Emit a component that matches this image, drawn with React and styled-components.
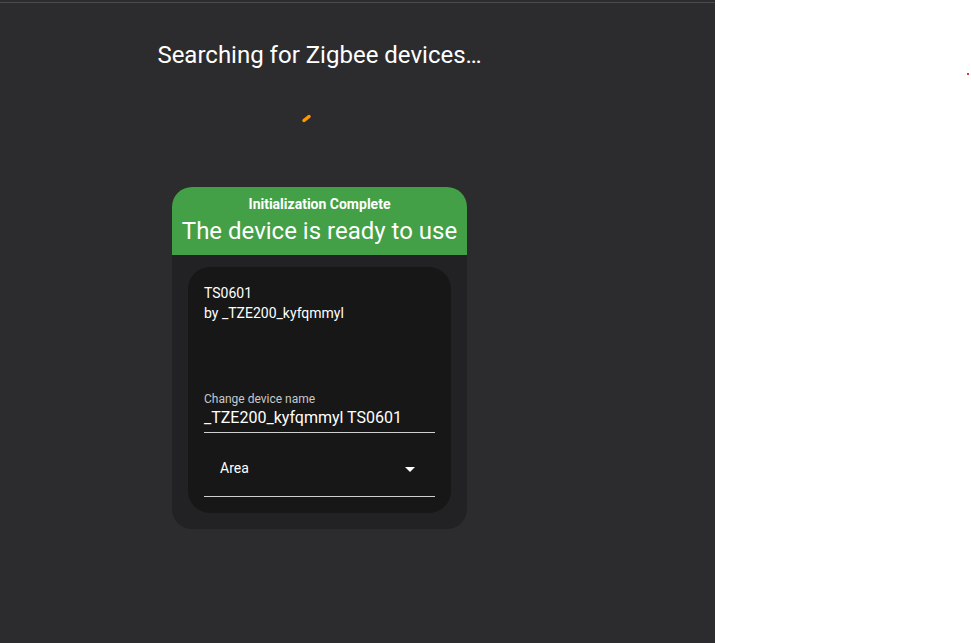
import React from 'react';
import styled, { createGlobalStyle } from 'styled-components';

const Global = createGlobalStyle`
  html, body {
    margin: 0;
    padding: 0;
    background: #ffffff;
    font-family: Roboto, "Noto Sans", sans-serif;
  }
`;

const Page = styled.div`
  display: flex;
  height: 643px;
`;

const Panel = styled.div`
  width: 715px;
  height: 100%;
  background: #2c2c2e;
  border-top: 1px solid #4b4b4d;
  margin-top: 2px;
  box-shadow: 0 -2px 0 #2c2c2e;
  box-sizing: border-box;
  display: flex;
  flex-direction: column;
  align-items: center;
  padding-right: 76px;
`;

const Title = styled.h1`
  margin: 36px 0 0;
  font-size: 24px;
  font-weight: 400;
  line-height: 32px;
  color: #ffffff;
`;

const Spinner = styled.svg`
  display: block;
  margin: 42px 0 0 -25px;
`;

const Card = styled.div`
  margin-top: 64px;
  width: 295px;
  background: #222224;
  border-radius: 20px;
  overflow: hidden;
  padding-bottom: 16px;
`;

const Banner = styled.div`
  background: #43a047;
  color: #ffffff;
  text-align: center;
  padding: 8px 0 7px;
`;

const BannerTitle = styled.div`
  font-size: 14px;
  font-weight: 700;
  line-height: 18px;
`;

const BannerText = styled.div`
  font-size: 24px;
  line-height: 34px;
  margin-top: 1px;
`;

const Inner = styled.div`
  margin: 12px 16px 0;
  background: #171717;
  border-radius: 22px;
  padding: 16px 16px 16px;
  display: flex;
  flex-direction: column;
`;

const Info = styled.div`
  color: #ffffff;
  font-size: 14px;
  line-height: 20px;
  height: 109px;
`;

const Field = styled.div`
  border-bottom: 1px solid #d0d0d0;
  padding-bottom: 2px;
`;

const Label = styled.div`
  font-size: 12px;
  line-height: 14px;
  color: #c8c8c8;
`;

const Value = styled.div`
  font-size: 16px;
  line-height: 24px;
  color: #ffffff;
`;

const Select = styled.div`
  margin-top: 12px;
  border-bottom: 1px solid #d0d0d0;
  height: 52px;
  box-sizing: border-box;
  display: flex;
  align-items: flex-end;
  justify-content: space-between;
  padding: 0 20px 19px 16px;
  color: #ffffff;
  font-size: 14px;
  line-height: 18px;

  svg {
    margin-bottom: 5px;
  }
`;

const Dot = styled.div`
  position: absolute;
  left: 967px;
  top: 73px;
  width: 2px;
  height: 2px;
  background: #d43a3a;
`;

export default function App() {
  return (
    <Page>
      <Global />
      <Panel>
        <Title>Searching for Zigbee devices…</Title>
        <Spinner width="12" height="10" viewBox="0 0 12 10">
          <path d="M3 7.5 L8 3.5" stroke="#ff9800" strokeWidth="3.5" strokeLinecap="round" />
        </Spinner>
        <Card>
          <Banner>
            <BannerTitle>Initialization Complete</BannerTitle>
            <BannerText>The device is ready to use</BannerText>
          </Banner>
          <Inner>
            <Info>
              <div>TS0601</div>
              <div>by _TZE200_kyfqmmyl</div>
            </Info>
            <Field>
              <Label>Change device name</Label>
              <Value>_TZE200_kyfqmmyl TS0601</Value>
            </Field>
            <Select>
              <span>Area</span>
              <svg width="10" height="5" viewBox="0 0 10 5">
                <path d="M0 0 L10 0 L5 5 Z" fill="#ffffff" />
              </svg>
            </Select>
          </Inner>
        </Card>
      </Panel>
      <Dot />
    </Page>
  );
}
